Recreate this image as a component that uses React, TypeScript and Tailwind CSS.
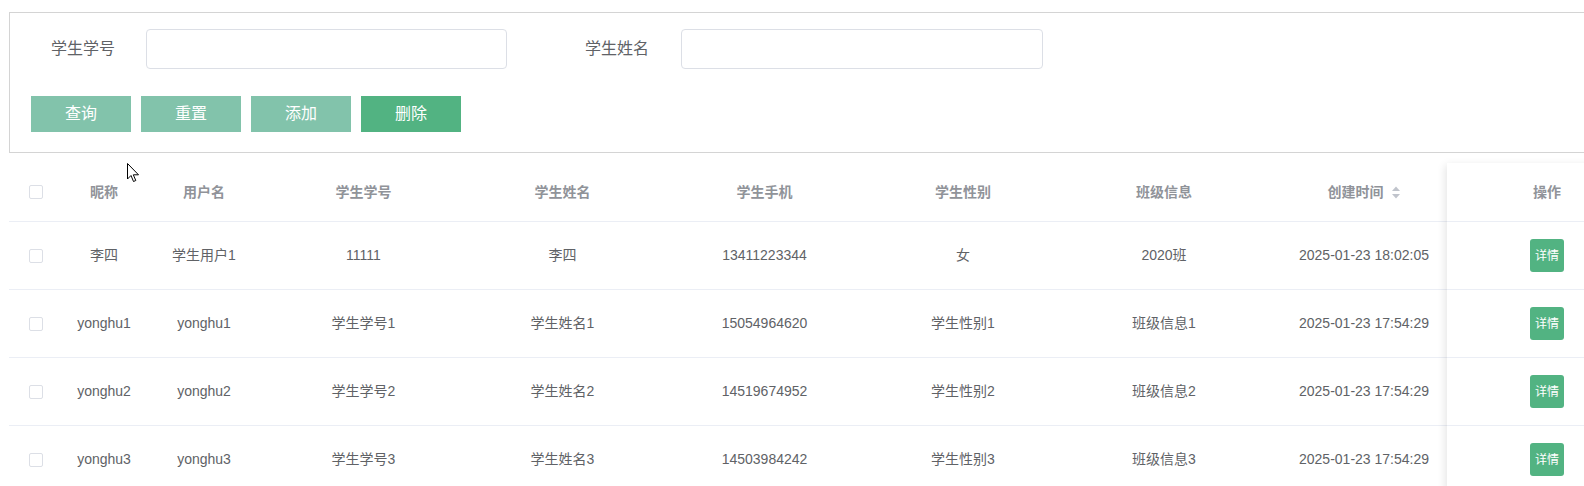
import React from "react";

const cols = [82, 118, 201, 197, 207, 190, 212];
const headers = ["昵称", "用户名", "学生学号", "学生姓名", "学生手机", "学生性别", "班级信息"];
const rows = [
  ["李四", "学生用户1", "11111", "李四", "13411223344", "女", "2020班", "2025-01-23 18:02:05"],
  ["yonghu1", "yonghu1", "学生学号1", "学生姓名1", "15054964620", "学生性别1", "班级信息1", "2025-01-23 17:54:29"],
  ["yonghu2", "yonghu2", "学生学号2", "学生姓名2", "14519674952", "学生性别2", "班级信息2", "2025-01-23 17:54:29"],
  ["yonghu3", "yonghu3", "学生学号3", "学生姓名3", "14503984242", "学生性别3", "班级信息3", "2025-01-23 17:54:29"],
];

function Checkbox() {
  return <span className="block w-[14px] h-[14px] border border-[#dcdfe6] rounded-[2px] bg-white" />;
}

function SortIcon() {
  return (
    <svg width="10" height="13" viewBox="0 0 10 13" className="ml-[7px]">
      <path d="M5 0.5 L9 5 L1 5 Z" fill="#c0c4cc" />
      <path d="M1 8 L9 8 L5 12.5 Z" fill="#c0c4cc" />
    </svg>
  );
}

export default function App() {
  return (
    <div className="relative w-[1584px] h-[486px] overflow-hidden bg-white font-['Liberation_Sans','Noto_Sans_CJK_SC',sans-serif]">
      <div className="w-[1700px]">
        {/* search panel */}
        <div className="ml-[9px] mt-[12px] border border-[#d4d4d4] pl-[21px] pt-[16px] pb-[20px]">
          <div className="flex items-center">
            <label className="w-[115px] pr-[31px] text-right text-[16px] text-[#606266]">学生学号</label>
            <div className="w-[361px] h-[40px] border border-[#dcdfe6] rounded-[4px] bg-white" />
            <label className="w-[174px] pr-[32px] text-right text-[16px] text-[#606266]">学生姓名</label>
            <div className="w-[362px] h-[40px] border border-[#dcdfe6] rounded-[4px] bg-white" />
          </div>
          <div className="flex gap-[10px] mt-[27px]">
            <button className="w-[100px] h-[36px] bg-[#82c3ab] text-white text-[16px]">查询</button>
            <button className="w-[100px] h-[36px] bg-[#82c3ab] text-white text-[16px]">重置</button>
            <button className="w-[100px] h-[36px] bg-[#82c3ab] text-white text-[16px]">添加</button>
            <button className="w-[100px] h-[36px] bg-[#52b382] text-white text-[16px]">删除</button>
          </div>
        </div>

        {/* table */}
        <div className="ml-[9px] mt-[10px] flex">
          <div className="flex flex-col">
            <div className="flex h-[59px] border-b border-[#ebeef5] items-center text-[14px] font-bold text-[#909399]">
              <div className="w-[54px] flex justify-center"><Checkbox /></div>
              {headers.map((h, i) => (
                <div key={h + i} style={{ width: cols[i] }} className="text-center">{h}</div>
              ))}
              <div className="w-[177px] pl-[11px] flex items-center justify-center">
                <span>创建时间</span>
                <SortIcon />
              </div>
            </div>
            {rows.map((r, ri) => (
              <div key={ri} className="flex h-[68px] border-b border-[#ebeef5] items-center text-[14px] text-[#606266]">
                <div className="w-[54px] flex justify-center"><Checkbox /></div>
                {r.slice(0, 7).map((c, i) => (
                  <div key={i} style={{ width: cols[i] }} className="text-center">{c}</div>
                ))}
                <div className="w-[177px] pl-[11px] text-center whitespace-nowrap">{r[7]}</div>
              </div>
            ))}
          </div>
          <div className="w-[200px] flex flex-col bg-white relative z-10 shadow-[-4px_0_8px_-2px_rgba(0,0,0,0.10)]">
            <div className="h-[59px] border-b border-[#ebeef5] flex items-center justify-center text-[14px] font-bold text-[#909399]">操作</div>
            {rows.map((_, ri) => (
              <div key={ri} className="h-[68px] border-b border-[#ebeef5] flex items-center justify-center">
                <button className="w-[34px] h-[33px] rounded-[3px] bg-[#52b382] text-white text-[12px]">详情</button>
              </div>
            ))}
          </div>
        </div>
      </div>

      {/* mouse cursor */}
      <svg className="absolute left-[127px] top-[163px]" width="13" height="20" viewBox="0 0 13 20">
        <path d="M0.5 0.5 L0.5 16 L4 12.5 L6.5 18.5 L8.8 17.5 L6.3 11.8 L11.5 11.8 Z" fill="white" stroke="black" strokeWidth="1" strokeLinejoin="miter" />
      </svg>
    </div>
  );
}
